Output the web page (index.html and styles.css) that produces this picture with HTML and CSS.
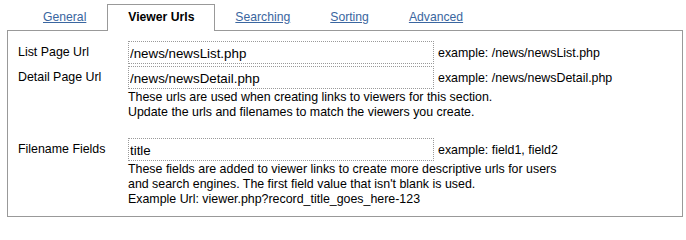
FILE: index.html
```html
<!DOCTYPE html>
<html>
<head>
<meta charset="utf-8">
<link rel="stylesheet" href="styles.css">
</head>
<body>
<div class="page">
  <div class="tabs">
    <a class="tab" href="#">General</a>
    <span class="tab active">Viewer Urls</span>
    <a class="tab" href="#">Searching</a>
    <a class="tab" href="#">Sorting</a>
    <a class="tab" href="#">Advanced</a>
  </div>
  <div class="panel">
    <div class="form">
      <div class="label">List Page Url</div>
      <div class="field"><input class="text" type="text" value="/news/newsList.php"><span class="example">example: /news/newsList.php</span></div>

      <div class="label">Detail Page Url</div>
      <div class="field"><input class="text" type="text" value="/news/newsDetail.php"><span class="example">example: /news/newsDetail.php</span></div>

      <div class="desc">These urls are used when creating links to viewers for this section.<br>Update the urls and filenames to match the viewers you create.</div>

      <div class="label spaced">Filename Fields</div>
      <div class="field spaced"><input class="text" type="text" value="title"><span class="example">example: field1, field2</span></div>

      <div class="desc">These fields are added to viewer links to create more descriptive urls for users<br>and search engines. The first field value that isn't blank is used.<br>Example Url: viewer.php?record_title_goes_here-123</div>
    </div>
  </div>
</div>
</body>
</html>
```

FILE: styles.css
```css
html, body {
  margin: 0;
  padding: 0;
  background: #ffffff;
}

body {
  font-family: "Liberation Sans", Arial, sans-serif;
  font-size: 12.4px;
  color: #000000;
}

.page {
  padding: 4px 0 0 7px;
  width: 676px;
}

.tabs {
  display: flex;
  align-items: flex-start;
  height: 26px;
  padding-left: 16px;
  font-size: 12.2px;
}

.tab {
  display: block;
  padding: 0 20px;
  height: 26px;
  line-height: 26px;
  color: #3a66a0;
  text-decoration: underline;
}

.tab.active {
  position: relative;
  z-index: 1;
  margin-left: 1px;
  width: 106px;
  padding: 0;
  text-align: center;
  height: 26px;
  line-height: 25px;
  border: 1px solid #999999;
  border-bottom: none;
  background: #ffffff;
  color: #000000;
  font-weight: bold;
  text-decoration: none;
}

.panel {
  border: 1px solid #999999;
  padding: 10px 10px 9px 10px;
}

.form {
  display: grid;
  grid-template-columns: 110px 1fr;
  row-gap: 2px;
}

.label {
  grid-column: 1;
  align-self: center;
  line-height: 15px;
}

.field {
  grid-column: 2;
  display: flex;
  align-items: center;
}

.spaced {
  margin-top: 16px;
}

.text {
  box-sizing: border-box;
  width: 306px;
  height: 23px;
  margin: 0;
  padding: 1px 1px 0 1px;
  border: 1px dotted #9a9a9a;
  font-family: "Liberation Sans", Arial, sans-serif;
  font-size: 13.33px;
  color: #000000;
  background: #ffffff;
  outline: none;
}

.example {
  margin-left: 4px;
  white-space: nowrap;
}

.desc {
  grid-column: 2;
  line-height: 15px;
  margin-top: -1px;
  white-space: nowrap;
}
```
